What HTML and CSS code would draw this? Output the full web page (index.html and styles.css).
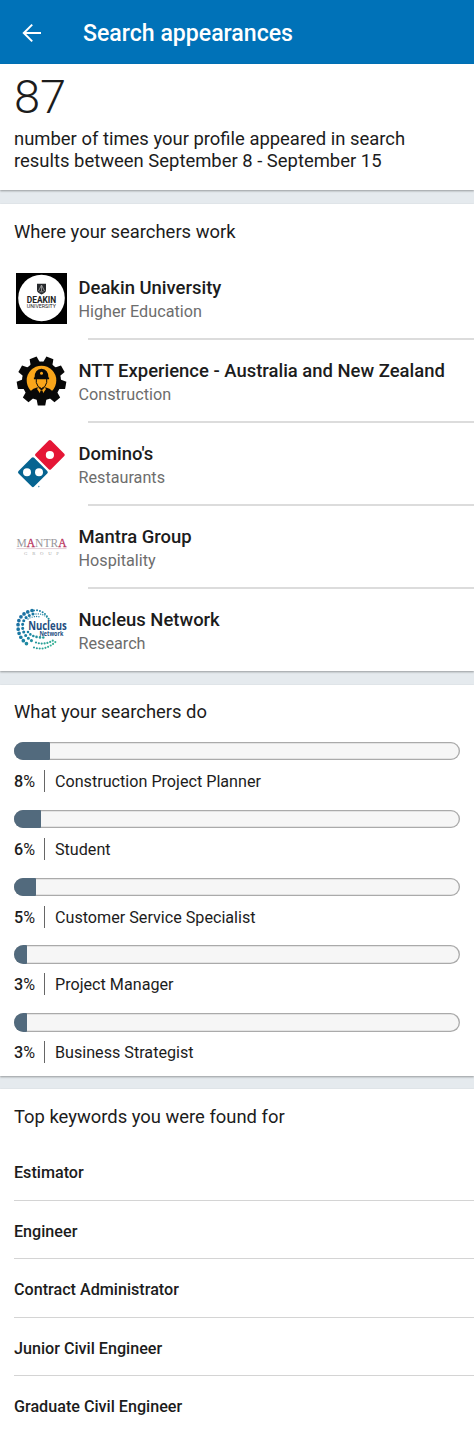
FILE: index.html
```html
<!DOCTYPE html>
<html lang="en">
<head>
    <meta charset="UTF-8">
    <meta name="viewport" content="width=device-width, initial-scale=1.0">
    <title>Search appearances</title>
    <link rel="stylesheet" href="styles.css">
</head>
<body>
    <header class="header">
        <svg class="back-icon" viewBox="0 0 20 20">
            <path d="M19 10H2M10.2 1.6L1.8 10l8.4 8.4"/>
        </svg>
        <h1>Search appearances</h1>
    </header>

    <section class="card summary">
        <div class="count">87</div>
        <p>number of times your profile appeared in search<br>results between September 8 - September 15</p>
    </section>

    <section class="card companies">
        <h2>Where your searchers work</h2>
        <ul>
            <li class="company">
                <svg class="logo" viewBox="0 0 51 51">
                    <rect width="51" height="51" fill="#000"/>
                    <circle cx="25.5" cy="25" r="23.3" fill="#fff"/>
                    <path d="M21 10.8h9v6.2q0 3-4.5 4.4Q21 20 21 17z" fill="#26282b"/>
                    <path d="M22.5 18l3-6 3 6M23.5 18.8h4M25.5 12v6" fill="none" stroke="#aaa" stroke-width=".8"/>
                    <text class="deakin" x="10.8" y="29.8" textLength="29.4" lengthAdjust="spacingAndGlyphs">DEAKIN</text>
                    <text class="deakin-sub" x="10.8" y="35.3" textLength="29.2" lengthAdjust="spacingAndGlyphs">UNIVERSITY</text>
                </svg>
                <div class="info">
                    <h3>Deakin University</h3>
                    <p>Higher Education</p>
                </div>
            </li>
            <li class="company">
                <svg class="logo" viewBox="0 0 51 51">
                    <defs>
                        <path id="tooth" d="M20.4 8l1.4-7.6h7.4L30.6 8z"/>
                    </defs>
                    <g fill="#080808">
                        <circle cx="25.5" cy="25" r="19.6"/>
                        <use href="#tooth" transform="rotate(20 25.5 25)"/>
                        <use href="#tooth" transform="rotate(60 25.5 25)"/>
                        <use href="#tooth" transform="rotate(100 25.5 25)"/>
                        <use href="#tooth" transform="rotate(140 25.5 25)"/>
                        <use href="#tooth" transform="rotate(180 25.5 25)"/>
                        <use href="#tooth" transform="rotate(220 25.5 25)"/>
                        <use href="#tooth" transform="rotate(260 25.5 25)"/>
                        <use href="#tooth" transform="rotate(300 25.5 25)"/>
                        <use href="#tooth" transform="rotate(340 25.5 25)"/>
                    </g>
                    <circle cx="25.5" cy="24.5" r="14.8" fill="#f9a51a"/>
                    <path d="M13 40q0-6.5 8-8.5h9q8 2 8 8.5z" fill="#080808"/>
                    <path d="M20.3 22v4.5q1 5 5.2 6 4.2-1 5.2-6V22z" fill="#f9a51a" stroke="#080808"/>
                    <path d="M22.2 31.5l3.3 3 3.3-3 1.2 1.5-4.5 6.5-4.5-6.5z" fill="#f9a51a"/>
                    <path d="M24.5 34.5h2l1 4-2 2.5-2-2.5z" fill="#080808"/>
                    <path d="M18.6 21.5q0-8.2 6.9-8.7 6.9.5 6.9 8.7h.7v1.7H17.9v-1.7z" fill="#080808"/>
                    <circle cx="25.5" cy="17.3" r="1.5" fill="#f9a51a"/>
                </svg>
                <div class="info">
                    <h3>NTT Experience - Australia and New Zealand</h3>
                    <p>Construction</p>
                </div>
            </li>
            <li class="company">
                <svg class="logo" viewBox="0 0 51 51">
                    <rect x="22.9" y="4.9" width="22" height="22" rx="1.7" transform="rotate(45 33.9 15.9)" fill="#e51636"/>
                    <rect x="5.9" y="22.2" width="22" height="22" rx="1.7" transform="rotate(45 16.9 33.2)" fill="#066491"/>
                    <g fill="#fff">
                        <circle cx="33.9" cy="16" r="4.1"/>
                        <circle cx="11" cy="33.3" r="4"/>
                        <circle cx="23" cy="33.3" r="4"/>
                    </g>
                    <circle cx="22.8" cy="47.6" r=".8" fill="#5b95b3"/>
                </svg>
                <div class="info">
                    <h3>Domino's</h3>
                    <p>Restaurants</p>
                </div>
            </li>
            <li class="company">
                <svg class="logo" viewBox="0 0 51 51">
                    <text class="mantra" x="0.5" y="24.8" textLength="50" lengthAdjust="spacingAndGlyphs">M<tspan class="pink">A</tspan>NTR<tspan class="pink">A</tspan></text>
                    <path d="M.5 26.6h50" stroke="#d9b6c2" stroke-width=".7"/>
                    <text class="mantra-sub" x="8" y="32.5" textLength="35">GROUP</text>
                </svg>
                <div class="info">
                    <h3>Mantra Group</h3>
                    <p>Hospitality</p>
                </div>
            </li>
            <li class="company">
                <svg class="logo" viewBox="0 0 51 51">
                    <defs>
                        <linearGradient id="dots" x1="0" y1="0" x2="45" y2="30" gradientUnits="userSpaceOnUse">
                            <stop offset="0" stop-color="#1c62a0"/>
                            <stop offset=".45" stop-color="#1a80a4"/>
                            <stop offset="1" stop-color="#38b394"/>
                        </linearGradient>
                    </defs>
                    <g fill="none" stroke="url(#dots)" stroke-linecap="round">
                        <path d="M16 5.5Q2 9 2 21q0 13 12 20" stroke-width="3.7" stroke-dasharray="0 4.3"/>
                        <path d="M18 5.5q9-1.5 15 9" stroke-width="2" stroke-dasharray="0 3"/>
                        <path d="M18 42.5q12 4 23-7" stroke-width="2.1" stroke-dasharray="0 2.9"/>
                        <path d="M17 9Q6.5 12 6.5 21.5 7 31 17 36.500" stroke-width="3.1" stroke-dasharray="0 3.9"/>
                        <path d="M20 9q8-1 14 6.5" stroke-width="1.4" stroke-dasharray="0 2.3"/>
                        <path d="M20 37.5q9 3 18-2.5" stroke-width="2.2" stroke-dasharray="0 2.900"/>
                        <path d="M12 14q5-3.5 13-2" stroke-width="1.4" stroke-dasharray="0 2.3"/>
                        <path d="M12 27q4 6 18 5.5" stroke-width="2.6" stroke-dasharray="0 3.4"/>
                    </g>
                    <text class="nucleus" x="12.2" y="24.5" textLength="38.500" lengthAdjust="spacingAndGlyphs">Nucleus</text>
                    <text class="nucleus-sub" x="23.4" y="30.6" textLength="24" lengthAdjust="spacingAndGlyphs">Network</text>
                </svg>
                <div class="info">
                    <h3>Nucleus Network</h3>
                    <p>Research</p>
                </div>
            </li>
        </ul>
    </section>

    <section class="card roles">
        <h2>What your searchers do</h2>
        <div class="role">
            <div class="bar"><div class="fill" style="width: 8%"></div></div>
            <div class="label"><p><b>8</b>%</p><span>Construction Project Planner</span></div>
        </div>
        <div class="role">
            <div class="bar"><div class="fill" style="width: 6%"></div></div>
            <div class="label"><p><b>6</b>%</p><span>Student</span></div>
        </div>
        <div class="role">
            <div class="bar"><div class="fill" style="width: 5%"></div></div>
            <div class="label"><p><b>5</b>%</p><span>Customer Service Specialist</span></div>
        </div>
        <div class="role">
            <div class="bar"><div class="fill" style="width: 3%"></div></div>
            <div class="label"><p><b>3</b>%</p><span>Project Manager</span></div>
        </div>
        <div class="role">
            <div class="bar"><div class="fill" style="width: 3%"></div></div>
            <div class="label"><p><b>3</b>%</p><span>Business Strategist</span></div>
        </div>
    </section>

    <section class="card keywords">
        <h2>Top keywords you were found for</h2>
        <ul>
            <li>Estimator</li>
            <li>Engineer</li>
            <li>Contract Administrator</li>
            <li>Junior Civil Engineer</li>
            <li>Graduate Civil Engineer</li>
        </ul>
    </section>
</body>
</html>
```
FILE: styles.css
```css
* {
    box-sizing: border-box;
    margin: 0;
    padding: 0;
}
body {
    font-family: Roboto, "Liberation Sans", sans-serif;
    background: #e5eaee;
    color: #1c1c1c;
}
ul {
    list-style: none;
}
.header {
    display: flex;
    align-items: center;
    height: 64px;
    padding: 2px 0 0 22px;
    background: #0072b8;
    color: white;
    box-shadow: 0 1px 0 #4d99c8;
}
.back-icon {
    width: 20px;
    height: 20px;
    margin-right: 41px;
    fill: none;
    stroke: white;
    stroke-width: 2;
}
h1 {
    font-size: 23.1px;
    font-weight: 500;
}
.card {
    background: white;
    margin-bottom: 14px;
    box-shadow: 0 1px 2px rgba(0, 0, 0, 0.35);
}
h2 {
    font-size: 18.4px;
    font-weight: 400;
    line-height: 22px;
}
.summary {
    height: 126px;
    padding: 8px 14px 0;
}
.count {
    font-size: 47px;
    font-weight: 300;
    line-height: 49px;
}
.summary p {
    margin-top: 7px;
    font-size: 18.43px;
    line-height: 22px;
}
.companies {
    height: 467px;
    padding: 17px 0 0 16px;
}
.companies h2 {
    margin-left: -2px;
}
.companies ul {
    margin-top: 12px;
}
.company {
    display: flex;
    height: 83px;
    padding-top: 18px;
}
.company + .company {
    background: linear-gradient(#dcdcdc, #dcdcdc) 72px 0 / 100% 2px no-repeat;
}
.logo {
    width: 51px;
    height: 51px;
    margin-right: 11.5px;
    overflow: visible;
}
.info {
    padding-top: 4px;
}
.info h3 {
    font-size: 18.45px;
    font-weight: 500;
    line-height: 23px;
    white-space: nowrap;
}
.info p {
    font-size: 16.2px;
    line-height: 23px;
    color: #6d6d6d;
}
.deakin {
    font-size: 9.5px;
    font-weight: 700;
    fill: #222;
}
.deakin-sub {
    font-size: 5.6px;
    fill: #222;
}
.mantra {
    font-family: "Liberation Serif", serif;
    font-size: 12.5px;
    fill: #99979c;
}
.mantra .pink {
    fill: #b8325c;
    stroke: #b8325c;
    stroke-width: 0.3px;
}
.mantra-sub {
    font-family: "Liberation Serif", serif;
    font-size: 4.8px;
    fill: #aaa;
}
.nucleus {
    font-family: "Open Sans", sans-serif;
    font-size: 11.5px;
    font-weight: 700;
    fill: #234d80;
}
.nucleus-sub {
    font-family: "Open Sans", sans-serif;
    font-size: 6.8px;
    font-weight: 700;
    fill: #234d80;
}
.roles {
    height: 391px;
    margin-bottom: 13px;
    padding: 16.4px 14px 0;
}
.roles h2 {
    margin-bottom: 18.6px;
}
.role {
    height: 67.8px;
}
.bar {
    height: 18.5px;
    border-radius: 9.5px;
    background: #f6f6f6;
    box-shadow: inset 0 0 0 1.3px #aaa;
    overflow: hidden;
}
.fill {
    height: 100%;
    background: #526a7d;
    border-radius: 0 1px 1px 0;
}
.label {
    display: flex;
    align-items: center;
    height: 22px;
    margin-top: 9.5px;
    font-size: 16.15px;
}
.label p {
    width: 30px;
    padding-top: 1px;
}
.label b {
    font-weight: 500;
}
.label span {
    height: 22px;
    padding-left: 10px;
    border-left: 1px solid #666;
    line-height: 24px;
}
.keywords {
    height: 351px;
    margin-bottom: 0;
    padding: 17.4px 0 0 14px;
}
.keywords ul {
    margin-top: 13.6px;
}
.keywords li {
    height: 58.6px;
    font-size: 16.15px;
    font-weight: 500;
    line-height: 62px;
    border-bottom: 1px solid #d4d4d4;
}
.keywords li:last-child {
    border-bottom: none;
}
```
